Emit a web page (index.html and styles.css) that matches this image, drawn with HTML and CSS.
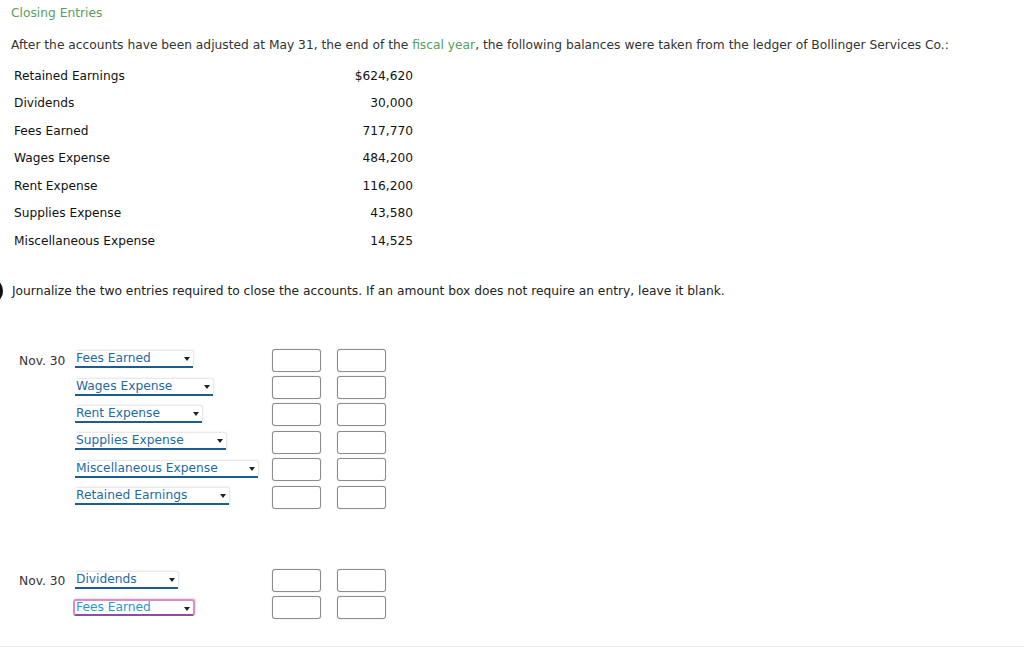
FILE: index.html
```html
<!DOCTYPE html>
<html>
<head>
<meta charset="utf-8">
<link rel="stylesheet" href="styles.css">
</head>
<body>
<div class="page">
  <div class="title">Closing Entries</div>
  <p class="intro">After the accounts have been adjusted at May 31, the end of the <span class="term">fiscal year</span>, the following balances were taken from the ledger of Bollinger Services Co.:</p>
  <div class="ledger">
    <div class="lbl">Retained Earnings</div><div class="amt">$624,620</div>
    <div class="lbl">Dividends</div><div class="amt">30,000</div>
    <div class="lbl">Fees Earned</div><div class="amt">717,770</div>
    <div class="lbl">Wages Expense</div><div class="amt">484,200</div>
    <div class="lbl">Rent Expense</div><div class="amt">116,200</div>
    <div class="lbl">Supplies Expense</div><div class="amt">43,580</div>
    <div class="lbl">Miscellaneous Expense</div><div class="amt">14,525</div>
  </div>
  <div class="question">
    <span class="marker"></span>
    <p class="instr">Journalize the two entries required to close the accounts. If an amount box does not require an entry, leave it blank.</p>
  </div>
  <div class="journal j1">
    <div class="date">Nov. 30</div>
    <div class="acct"><span class="sel w118">Fees Earned</span></div>
    <div class="box"></div><div class="box"></div>

    <div class="date"></div>
    <div class="acct"><span class="sel w138">Wages Expense</span></div>
    <div class="box"></div><div class="box"></div>

    <div class="date"></div>
    <div class="acct"><span class="sel w127">Rent Expense</span></div>
    <div class="box"></div><div class="box"></div>

    <div class="date"></div>
    <div class="acct"><span class="sel w151">Supplies Expense</span></div>
    <div class="box"></div><div class="box"></div>

    <div class="date"></div>
    <div class="acct"><span class="sel w183">Miscellaneous Expense</span></div>
    <div class="box"></div><div class="box"></div>

    <div class="date"></div>
    <div class="acct"><span class="sel w154">Retained Earnings</span></div>
    <div class="box"></div><div class="box"></div>
  </div>
  <div class="journal j2">
    <div class="date">Nov. 30</div>
    <div class="acct"><span class="sel w103">Dividends</span></div>
    <div class="box"></div><div class="box"></div>

    <div class="date"></div>
    <div class="acct"><span class="sel w118 focus">Fees Earned</span></div>
    <div class="box"></div><div class="box"></div>
  </div>
</div>
<div class="footer-line"></div>
</body>
</html>
```
FILE: styles.css
```css
html, body {
  margin: 0;
  padding: 0;
  background: #fff;
}
body {
  font-family: "DejaVu Sans", Verdana, sans-serif;
  font-size: 12.25px;
  color: #333;
  width: 1024px;
  height: 647px;
  overflow: hidden;
  position: relative;
}
.page {
  padding: 5px 0 0 11px;
}
.title {
  color: #56a05a;
  line-height: 16px;
}
.intro {
  margin: 15px 0 0 0;
  line-height: 18px;
  color: #333;
}
.term {
  color: #56a05a;
}
.ledger {
  display: grid;
  grid-template-columns: 1fr auto;
  width: 399px;
  margin: 8px 0 0 3px;
  grid-auto-rows: 27.5px;
  align-items: center;
  color: #111;
  font-size: 12.2px;
}
.amt {
  text-align: right;
}
.question {
  position: relative;
  margin-top: 27px;
}
.marker {
  position: absolute;
  left: -22px;
  top: -1px;
  width: 14px;
  height: 20px;
  border-radius: 50%;
  background: #111;
}
.instr {
  margin: 0 0 0 1px;
  line-height: 18px;
  color: #222;
}
.journal {
  display: grid;
  grid-template-columns: 56px 197px 49px 65px;
  grid-auto-rows: 27.4px;
  align-items: center;
  margin-left: 8px;
}
.j1 {
  margin-top: 47px;
}
.j2 {
  margin-top: 56px;
}
.date {
  color: #333;
  padding-top: 1px;
}
.box {
  box-sizing: border-box;
  width: 49px;
  height: 23px;
  border: 1px solid #8c8c8c;
  border-radius: 3px;
  box-shadow: 0 0 1px rgba(0,0,0,0.35);
  background: #fff;
}
.box + .box {
  margin-left: 16px;
}
.acct {
  display: flex;
  align-items: center;
}
.sel {
  position: relative;
  box-sizing: border-box;
  height: 17px;
  line-height: 15px;
  padding-left: 1px;
  color: #1f6aa5;
  border-bottom: 2px solid #1c5d8e;
  border-radius: 2px 2px 0 0;
  box-shadow: 1px -1px 2px rgba(0,0,0,0.12);
  background: #fff;
  margin-top: -1px;
}
.sel::after {
  content: "";
  position: absolute;
  right: 3px;
  top: 6px;
  border-left: 3.5px solid transparent;
  border-right: 3.5px solid transparent;
  border-top: 4px solid #222;
}
.sel.focus {
  color: #2a95d5;
  border: 2px solid #d88cc8;
  border-bottom-color: #8e4e9c;
  border-radius: 3px;
  margin-left: -2px;
  width: 122px;
  line-height: 13px;
}
.w103 { width: 103px; }
.w118 { width: 118px; }
.w127 { width: 127px; }
.w138 { width: 138px; }
.w151 { width: 151px; }
.w154 { width: 154px; }
.w183 { width: 183px; }
.footer-line {
  position: absolute;
  left: 0;
  right: 0;
  bottom: 0;
  height: 1px;
  background: #e8e8e8;
}
```
